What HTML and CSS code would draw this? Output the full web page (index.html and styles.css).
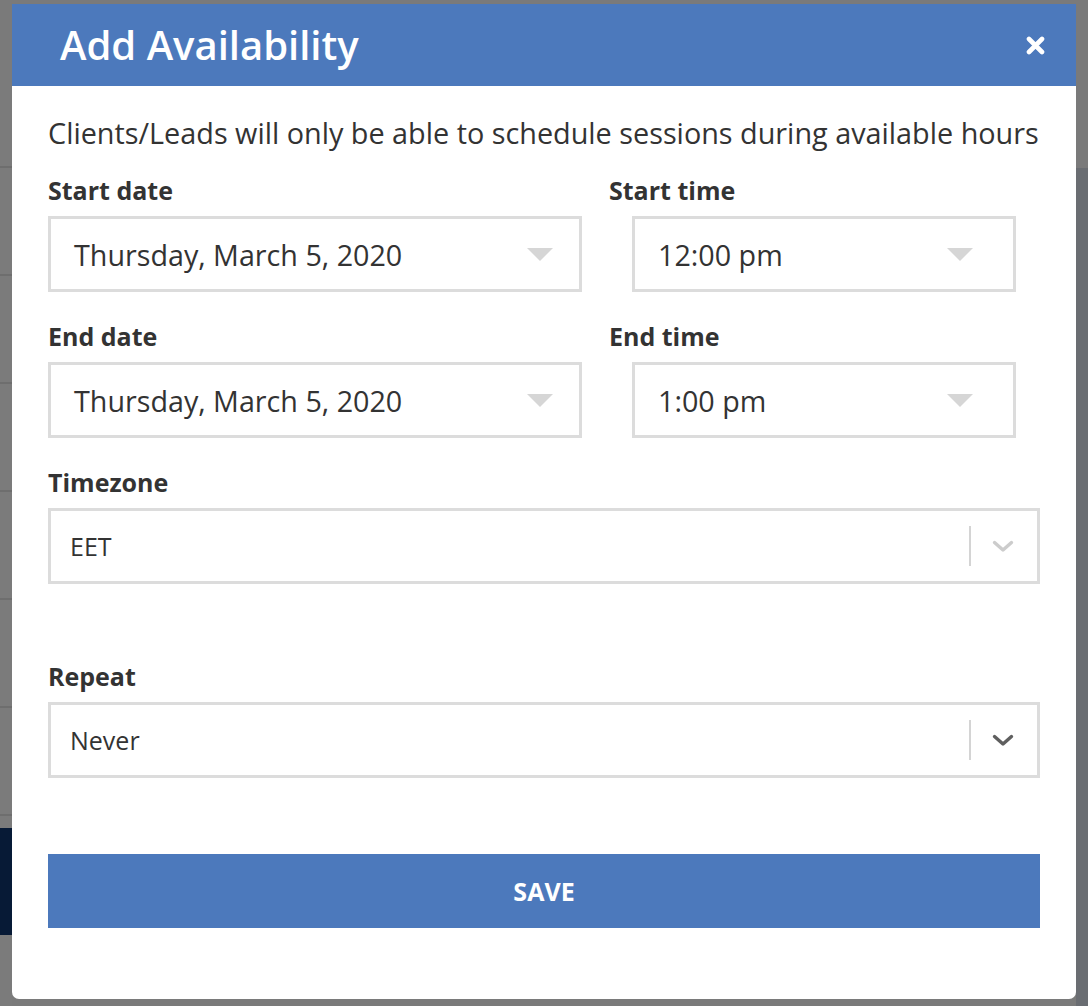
FILE: index.html
```html
<!DOCTYPE html>
<html lang="en">
<head>
  <meta charset="UTF-8">
  <meta name="viewport" content="width=device-width, initial-scale=1.0">
  <title>Add Availability</title>
  <link rel="stylesheet" href="styles.css">
</head>
<body>

  <div class="modal">
    <!-- Header -->
    <div class="modal-header">
      <h2>Add Availability</h2>
      <button class="close-btn" aria-label="Close">
        <svg width="19" height="19" viewBox="0 0 19 19">
          <path d="M3 3 L16 16 M16 3 L3 16" stroke="#fff" stroke-width="4.6" stroke-linecap="round" fill="none"/>
        </svg>
      </button>
    </div>

    <div class="modal-body">
      <p class="intro">Clients/Leads will only be able to schedule sessions during available hours</p>

      <div class="row">
        <div class="field">
          <label>Start date</label>
          <div class="picker">
            <span>Thursday, March 5, 2020</span>
            <span class="caret"></span>
          </div>
        </div>
        <div class="field right">
          <label>Start time</label>
          <div class="picker time">
            <span>12:00 pm</span>
            <span class="caret"></span>
          </div>
        </div>
      </div>

      <div class="row">
        <div class="field">
          <label>End date</label>
          <div class="picker">
            <span>Thursday, March 5, 2020</span>
            <span class="caret"></span>
          </div>
        </div>
        <div class="field right">
          <label>End time</label>
          <div class="picker time">
            <span>1:00 pm</span>
            <span class="caret"></span>
          </div>
        </div>
      </div>

      <div class="field">
        <label>Timezone</label>
        <div class="select">
          <span class="value">EET</span>
          <span class="sep"></span>
          <svg class="chevron" width="22" height="13" viewBox="0 0 22 13">
            <path d="M2.5 2.5 L11 10 L19.5 2.5" stroke="#cccccc" stroke-width="3.4" fill="none" stroke-linecap="round" stroke-linejoin="round"/>
          </svg>
        </div>
      </div>

      <div class="field repeat">
        <label>Repeat</label>
        <div class="select">
          <span class="value">Never</span>
          <span class="sep"></span>
          <svg class="chevron" width="22" height="13" viewBox="0 0 22 13">
            <path d="M2.5 2.5 L11 10 L19.5 2.5" stroke="#5f5f5f" stroke-width="3.4" fill="none" stroke-linecap="round" stroke-linejoin="round"/>
          </svg>
        </div>
      </div>

      <button class="save-btn">SAVE</button>
    </div>
  </div>

</body>
</html>
```

FILE: styles.css
```css
body {
  margin: 0;
  font-family: 'Open Sans', 'Noto Sans', sans-serif;
  color: #333;
  background:
    linear-gradient(#071a36, #071a36) 0 828px / 12px 107px no-repeat,
    linear-gradient(#6a6d72, #6a6d72) right 0 top 168px / 12px 100% no-repeat,
    repeating-linear-gradient(#7b7b7b 0, #7b7b7b 106px, #6e6e6e 106px, #6e6e6e 108px) 0 60px / 12px 100% no-repeat,
    #7a7a7a;
  min-height: 1006px;
}
.modal {
  width: 1064px;
  margin: 4px 12px 0;
  background: #fff;
  border-radius: 0 0 7px 7px;
  overflow: hidden;
}
.modal-header {
  background: #4c79bc;
  height: 82px;
  display: flex;
  align-items: center;
  justify-content: space-between;
  padding: 0 31px 0 48px;
}
.modal-header h2 {
  margin: 0;
  color: #fff;
  font-size: 40px;
  font-weight: 600;
  line-height: 1;
}
.close-btn {
  background: none;
  border: none;
  padding: 0;
  cursor: pointer;
  display: flex;
}
.modal-body {
  padding: 27px 36px 71px;
}
.intro {
  margin: 0 0 20px;
  font-size: 28.8px;
  line-height: 40px;
  white-space: nowrap;
}
.row {
  display: grid;
  grid-template-columns: 534px 1fr;
  column-gap: 27px;
}
.field {
  margin-bottom: 27px;
}
.field label {
  display: block;
  font-size: 25px;
  font-weight: 700;
  line-height: 34px;
  margin-bottom: 9px;
}
.field.right .picker {
  margin: 0 24px 0 23px;
}
.picker {
  height: 76px;
  box-sizing: border-box;
  border: 3px solid #dcdcdc;
  display: flex;
  align-items: center;
  justify-content: space-between;
  padding: 0 26px 0 23px;
  font-size: 28.7px;
}
.picker.time {
  padding-right: 40px;
}
.caret {
  width: 0;
  height: 0;
  border-left: 13px solid transparent;
  border-right: 13px solid transparent;
  border-top: 13px solid #d6d6d6;
}
.select {
  height: 76px;
  box-sizing: border-box;
  border: 3px solid #dcdcdc;
  display: flex;
  align-items: center;
  padding: 0 23px 0 19px;
  font-size: 25px;
}
.select .value {
  flex: 1;
}
.sep {
  width: 2px;
  height: 40px;
  background: #d4d4d4;
  margin-right: 21px;
}
.chevron {
  display: block;
}
.field.repeat {
  margin-top: 75px;
  margin-bottom: 76px;
}
.save-btn {
  display: block;
  width: 100%;
  height: 74px;
  background: #4c79bc;
  color: #fff;
  border: none;
  font-family: inherit;
  font-size: 25px;
  font-weight: 700;
  cursor: pointer;
}
```
